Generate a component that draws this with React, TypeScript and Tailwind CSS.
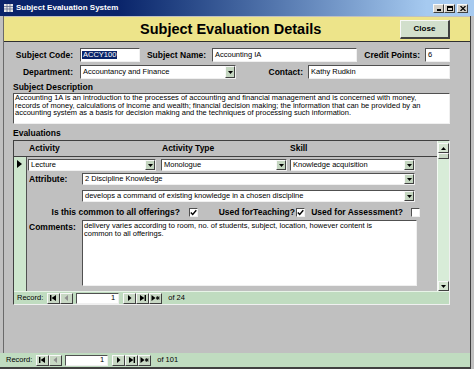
import React from 'react';

const sunken = 'border border-t-[#505050] border-l-[#505050] border-r-[#f0f0f0] border-b-[#f0f0f0] bg-white';
const raised = 'border border-t-[#f8f8f8] border-l-[#f8f8f8] border-r-[#404040] border-b-[#404040]';
const lbl = 'text-[8.5px] font-bold leading-none whitespace-nowrap';
const txt = 'text-[7.5px] leading-none whitespace-nowrap';

function DropBtn() {
  return (
    <div className={`w-[10px] h-full shrink-0 bg-[#c4d6c0] ${raised} flex items-center justify-center`}>
      <svg width="5" height="3" viewBox="0 0 5 3">
        <path d="M0 0H5L2.5 3Z" fill="#000" />
      </svg>
    </div>
  );
}

function Combo({ text, className }: { text: string; className: string }) {
  return (
    <div className={`${sunken} ${className} flex items-center shrink-0`}>
      <span className={`${txt} flex-1 pl-[2px] overflow-hidden`}>{text}</span>
      <DropBtn />
    </div>
  );
}

function Field({ text, className, selected }: { text: string; className: string; selected?: boolean }) {
  return (
    <div className={`${sunken} ${className} flex items-center shrink-0`}>
      <span className={`${txt} ml-[1px] ${selected ? 'bg-[#0a246a] text-white px-[1px]' : 'pl-[1px]'}`}>{text}</span>
    </div>
  );
}

function Check({ checked }: { checked?: boolean }) {
  return (
    <div className={`w-[9px] h-[9px] shrink-0 ${sunken} flex items-center justify-center`}>
      {checked && (
        <svg width="7" height="7" viewBox="0 0 7 7">
          <path d="M0.8 3.4L2.7 5.4L6.3 1.2" fill="none" stroke="#000" strokeWidth="1.4" />
        </svg>
      )}
    </div>
  );
}

function NavBtn({ kind }: { kind: 'first' | 'prev' | 'next' | 'last' | 'new' }) {
  return (
    <div className={`w-[13px] h-[11px] shrink-0 bg-[#c8d8c4] ${raised} flex items-center justify-center`}>
      <svg width="9" height="6" viewBox="0 0 9 6">
        {kind === 'first' && (
          <>
            <rect x="1" y="0" width="1.4" height="6" fill="#000" />
            <path d="M7 0L2.6 3L7 6Z" fill="#000" />
          </>
        )}
        {kind === 'prev' && <path d="M6 0L2.5 3L6 6Z" fill="#909090" />}
        {kind === 'next' && <path d="M3 0L6.5 3L3 6Z" fill="#000" />}
        {kind === 'last' && (
          <>
            <path d="M2 0L6.4 3L2 6Z" fill="#000" />
            <rect x="6.6" y="0" width="1.4" height="6" fill="#000" />
          </>
        )}
        {kind === 'new' && (
          <>
            <path d="M0.5 0L4.5 3L0.5 6Z" fill="#000" />
            <path d="M6.8 1V5M5 2L8.6 4M5 4L8.6 2" stroke="#000" strokeWidth="0.9" />
          </>
        )}
      </svg>
    </div>
  );
}

function RecordBar({ of, className }: { of: string; className: string }) {
  return (
    <div className={`bg-[#c0dcc0] flex items-center ${className}`}>
      <span className={txt}>Record:</span>
      <div className="ml-[4px] flex">
        <NavBtn kind="first" />
        <NavBtn kind="prev" />
      </div>
      <div className={`ml-[3px] w-[43px] h-[11px] ${sunken} flex items-center justify-end pr-[3px]`}>
        <span className={txt}>1</span>
      </div>
      <div className="ml-[4px] flex">
        <NavBtn kind="next" />
        <NavBtn kind="last" />
        <NavBtn kind="new" />
      </div>
      <span className={`${txt} ml-[6px]`}>of {of}</span>
    </div>
  );
}

function TitleBar() {
  return (
    <div className="h-[16px] shrink-0 bg-linear-to-r from-[#0a246a] from-25% to-[#a6caf0] to-90% flex items-center pl-[4px] pr-[6px]">
      <svg width="9" height="8" viewBox="0 0 9 8">
        <rect x="0" y="0" width="9" height="8" fill="#e8e8e8" />
        <path d="M0 2.5H9M0 5H9M3 0V8M6 0V8" stroke="#5a6a8a" strokeWidth="0.8" />
      </svg>
      <span className="ml-[3px] text-[8px] font-bold text-white leading-none whitespace-nowrap">
        Subject Evaluation System
      </span>
      <div className="ml-auto flex items-center">
        <div className={`w-[11px] h-[9px] bg-[#d4d0c8] ${raised} flex items-end justify-center pb-[1px]`}>
          <div className="w-[4px] h-[1.5px] bg-black" />
        </div>
        <div className={`w-[11px] h-[9px] bg-[#d4d0c8] ${raised} flex items-center justify-center`}>
          <div className="w-[6px] h-[5px] border border-black border-t-2" />
        </div>
        <div className={`ml-[2px] w-[11px] h-[9px] bg-[#d4d0c8] ${raised} flex items-center justify-center`}>
          <svg width="6" height="5" viewBox="0 0 6 5">
            <path d="M0.5 0L5.5 5M5.5 0L0.5 5" stroke="#000" strokeWidth="1.2" />
          </svg>
        </div>
      </div>
    </div>
  );
}

function Subform() {
  return (
    <div className="mt-[2px] w-[437px] h-[165px] border border-t-[#404040] border-l-[#404040] border-r-[#f0f0f0] border-b-[#f0f0f0] flex flex-col">
      <div className="flex-1 flex min-h-0">
        <div className="flex-1 flex flex-col">
          {/* column headings */}
          <div className="h-[16px] shrink-0 border-b border-[#404040] flex items-center pl-[15px]">
            <span className={`${lbl} w-[133px]`}>Activity</span>
            <span className={`${lbl} w-[128px]`}>Activity Type</span>
            <span className={lbl}>Skill</span>
          </div>
          <div className="flex-1 flex">
            {/* record selector */}
            <div className="w-[13px] shrink-0 bg-[#cde6cd] border-r border-[#505050] pt-[3px] pl-[3px]">
              <svg width="5" height="8" viewBox="0 0 5 8">
                <path d="M0 0L5 4L0 8Z" fill="#000" />
              </svg>
            </div>
            <div className="flex-1 flex flex-col">
              <div className="mt-[2px] h-[12px] flex">
                <Combo text="Lecture" className="ml-[1px] w-[128px] h-[12px]" />
                <Combo text="Monologue" className="ml-[5px] w-[126px] h-[12px]" />
                <Combo text="Knowledge acquisition" className="ml-[3px] w-[125px] h-[12px]" />
              </div>
              <div className="mt-[2px] h-[12px] flex items-center">
                <span className={`${lbl} w-[55px] pl-[2px]`}>Attribute:</span>
                <Combo text="2 Discipline Knowledge" className="w-[333px] h-[12px]" />
              </div>
              <div className="mt-[5px] h-[12px] flex items-center">
                <span className="w-[55px]" />
                <Combo text="develops a command of existing knowledge in a chosen discipline" className="w-[333px] h-[12px]" />
              </div>
              <div className="mt-[4px] h-[12px] flex items-center">
                <span className={`${lbl} w-[162px] text-right pr-[9px]`}>Is this common to all offerings?</span>
                <Check checked />
                <span className={`${lbl} w-[98px] text-right pr-[1px]`}>Used forTeaching?</span>
                <Check checked />
                <span className={`${lbl} w-[106px] text-right pr-[8px]`}>Used for Assessment?</span>
                <Check />
              </div>
              <div className="mt-[2px] flex">
                <span className={`${lbl} w-[55px] pl-[2px] pt-[3px]`}>Comments:</span>
                <div className={`${sunken} w-[335px] h-[66px] pl-[1px] pt-[1px]`}>
                  <p className={`${txt} leading-[9.5px]`}>
                    delivery varies according to room, no. of students, subject, location, however content is
                    <br />
                    common to all offerings.
                  </p>
                </div>
              </div>
            </div>
          </div>
        </div>
        {/* vertical scrollbar */}
        <div className="w-[12px] shrink-0 bg-[#d8ecd8] border-l border-[#f4fbf4] flex flex-col pt-[2px]">
          <div className={`h-[10px] bg-[#d4e4d0] ${raised} flex items-center justify-center`}>
            <svg width="5" height="3" viewBox="0 0 5 3">
              <path d="M0 3H5L2.5 0Z" fill="#000" />
            </svg>
          </div>
          <div className={`h-[6px] bg-[#c8d8c4] ${raised}`} />
          <div className="flex-1" />
          <div className={`h-[10px] bg-[#d4e4d0] ${raised} flex items-center justify-center`}>
            <svg width="5" height="3" viewBox="0 0 5 3">
              <path d="M0 0H5L2.5 3Z" fill="#000" />
            </svg>
          </div>
        </div>
      </div>
      <RecordBar of="24" className="h-[13px] shrink-0 pl-[3px] border-t border-[#e8f4e8]" />
    </div>
  );
}

export default function App() {
  return (
    <div className="w-[474px] h-[369px] overflow-hidden bg-[#c0c0c0] flex flex-col font-['Liberation_Sans',Arial,sans-serif] text-black">
      <TitleBar />
      <div className="h-[353px] mr-[3px] border-r border-[#404040] flex flex-col">
        <div className="flex-1 ml-[3px] border-l border-[#6a6a6a] pt-[1px] flex flex-col">
          {/* header band */}
          <div className="h-[25px] shrink-0 bg-[#ede48a] border-b border-[#303030] flex items-center">
            <h1 className="ml-[136px] text-[14.5px] font-bold leading-none whitespace-nowrap">
              Subject Evaluation Details
            </h1>
            <button className={`ml-auto mr-[20px] w-[50px] h-[19px] bg-[#d2dfcc] ${raised} border-r-2 border-b-2 text-[8px] font-bold leading-none`}>
              Close
            </button>
          </div>

          <div className="pl-[9px] flex flex-col">
            <div className="mt-[6px] h-[14px] flex items-center">
              <span className={`${lbl} w-[60px] text-right`}>Subject Code:</span>
              <Field text="ACCY100" selected className="ml-[7px] w-[60px] h-[14px]" />
              <span className={`${lbl} w-[66px] text-right`}>Subject Name:</span>
              <Field text="Accounting IA" className="ml-[6px] w-[145px] h-[14px]" />
              <span className={`${lbl} w-[63px] text-right`}>Credit Points:</span>
              <Field text="6" className="ml-[5px] w-[25px] h-[14px]" />
            </div>
            <div className="mt-[3px] h-[14px] flex items-center">
              <span className={`${lbl} w-[60px] text-right`}>Department:</span>
              <Combo text="Accountancy and Finance" className="ml-[7px] w-[156px] h-[14px]" />
              <span className={`${lbl} w-[67px] text-right`}>Contact:</span>
              <Field text="Kathy Rudkin" className="ml-[5px] w-[142px] h-[14px]" />
            </div>

            <div className={`mt-[3px] h-[10px] flex items-center ${lbl}`}>Subject Description</div>
            <div className={`mt-[1px] w-[437px] h-[31px] ${sunken} pl-[1px]`}>
              <p className={`${txt} leading-[10px]`}>
                Accounting 1A is an introduction to the processes of accounting and financial management and is concerned with money,
                <br />
                records of money, calculations of income and wealth; financial decision making; the information that can be provided by an
                <br />
                accounting system as a basis for decision making and the techniques of processing such information.
              </p>
            </div>

            <div className={`mt-[4px] h-[10px] flex items-center ${lbl}`}>Evaluations</div>
            <Subform />
          </div>
        </div>
        <RecordBar of="101" className="h-[14px] shrink-0 pl-[6px]" />
        <div className="h-[2px] shrink-0 bg-[#404040]" />
      </div>
    </div>
  );
}
